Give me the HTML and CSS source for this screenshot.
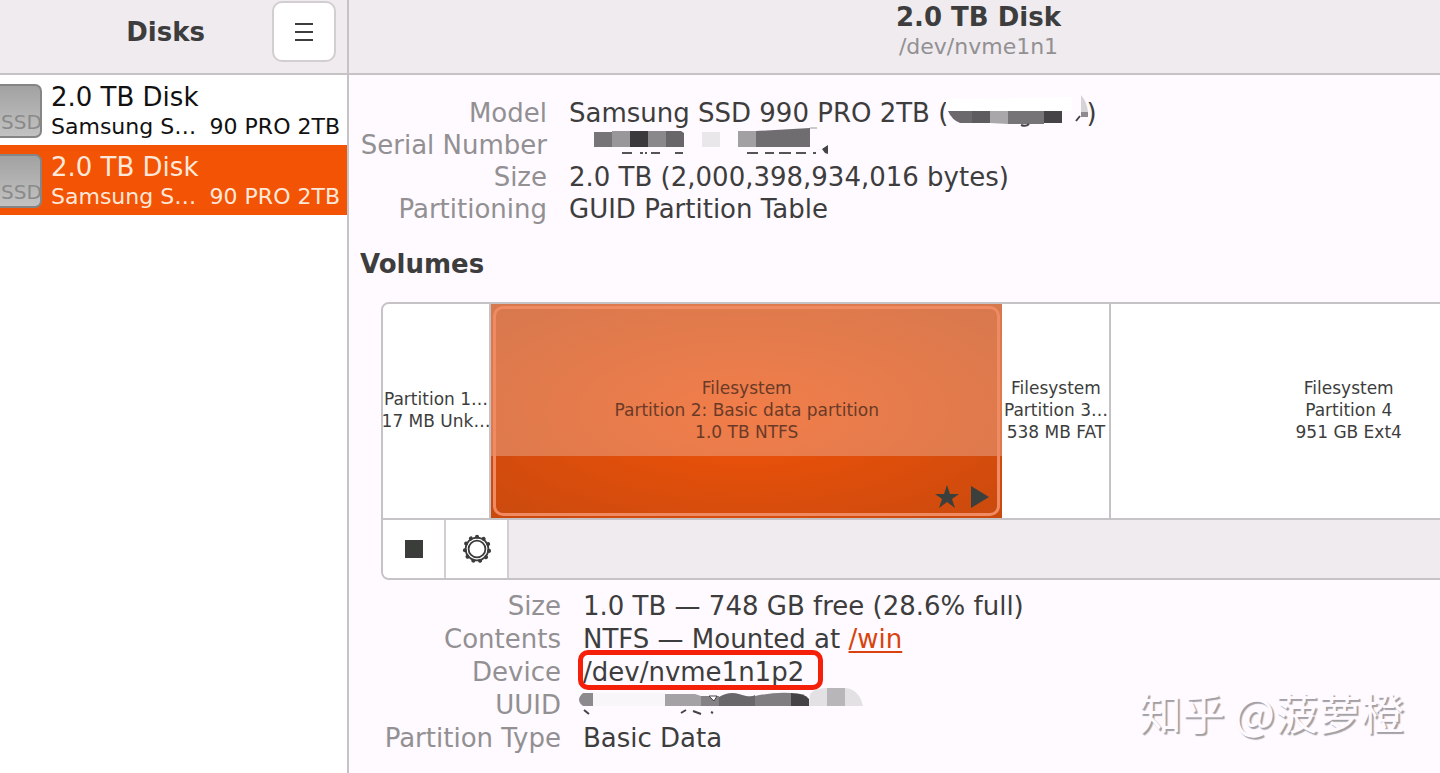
FILE: index.html
```html
<!DOCTYPE html>
<html lang="en">
<head>
<meta charset="utf-8">
<title>Disks</title>
<link rel="stylesheet" href="styles.css">
</head>
<body>
<div class="window">
  <aside class="sidebar">
    <header class="bar side-bar">
      <h1 class="title">Disks</h1>
      <button class="menu" type="button" aria-label="Menu">
        <svg width="20" height="20" viewBox="0 0 20 20"><path d="M1 2h18M1 10h18M1 18h18" stroke="#3d3d3d" stroke-width="2"/></svg>
      </button>
    </header>
    <nav class="disks">
      <a class="disk" href="#disk0">
        <span class="ssd">SSD</span>
        <span class="disk-text"><span class="disk-name">2.0 TB Disk</span><span class="disk-model"><span>Samsung S…</span><span>90 PRO 2TB</span></span></span>
      </a>
      <a class="disk selected" href="#disk1">
        <span class="ssd">SSD</span>
        <span class="disk-text"><span class="disk-name">2.0 TB Disk</span><span class="disk-model"><span>Samsung S…</span><span>90 PRO 2TB</span></span></span>
      </a>
    </nav>
  </aside>
  <main class="main">
    <div class="pane">
      <header class="bar main-bar">
        <h2 class="title">2.0 TB Disk</h2>
        <p class="subtitle">/dev/nvme1n1</p>
      </header>
      <div class="content">
        <dl class="facts drive">
          <dt>Model</dt>
          <dd>Samsung SSD 990 PRO 2TB (<svg class="mosaic" width="138" height="32" viewBox="949 96 138 32">
            <path d="M947 98h26l100-2v14H947z" fill="#fff"/>
            <path d="M949 110h24v12h-12q-8-3-12-12z" fill="#6c696d"/><path d="M973 110h18v12h-18z" fill="#5f5c60"/><path d="M991 110h18v13l-18-1z" fill="#aaa7ab"/><path d="M1009 110h36v13h-36z" fill="#777478"/><path d="M1045 110h18v12h-18z" fill="#464347"/>
            <path d="M1022 124q5 2 8-1M1077 120l4-5" stroke="#444" stroke-width="2" fill="none"/>
            <path d="M1082 94q6 7 7 17h-7z" fill="#d5d3d5"/><path d="M1082 111h7v5h-7z" fill="#8e8b8f"/>
          </svg>)</dd>
          <dt>Serial Number</dt>
          <dd><svg class="mosaic" width="262" height="32" viewBox="569 129 262 32">
            <path d="M594 132h18v15h-18z" fill="#777478"/><path d="M612 131h18v16h-18z" fill="#9a979b"/><path d="M630 131h18v16h-18z" fill="#3c393d"/><path d="M648 131h18v16h-18z" fill="#8b888c"/><path d="M666 131h15l3 2v14h-18z" fill="#69666a"/>
            <path d="M702 132h18v15h-18z" fill="#e9e7e9"/><path d="M738 131h18v16h-18z" fill="#a3a0a4"/><path d="M756 131l54-3v19h-54z" fill="#706d71"/><path d="M810 128h7" stroke="#999"/>
            <path d="M622 153h10M640 153h3M645 153h2M651 153h9M675 153h8M747 153h11M765 153h9M779 153h12M796 153h10M813 153h3" stroke="#555" stroke-width="2"/><path d="M822 149l6-4v9l-3-1z" fill="#444"/>
          </svg></dd>
          <dt>Size</dt><dd>2.0 TB (2,000,398,934,016 bytes)</dd>
          <dt>Partitioning</dt><dd>GUID Partition Table</dd>
        </dl>
        <h3 class="heading">Volumes</h3>
        <section class="volumes">
          <div class="grid">
            <div class="volume"><span>Partition 1…</span><span>17 MB Unk…</span></div>
            <div class="volume active">
              <span>Filesystem</span><span>Partition 2: Basic data partition</span><span>1.0 TB NTFS</span>
              <svg class="marks" width="58" height="26" viewBox="0 0 58 26" fill="#3b403c"><path d="M13 1l3 9h9l-7 5 3 9-8-6-8 6 3-9-7-5h9z"/><path d="M37 2l18 11-18 11z"/></svg>
            </div>
            <div class="volume"><span>Filesystem</span><span>Partition 3…</span><span>538 MB FAT</span></div>
            <div class="volume"><span>Filesystem</span><span>Partition 4</span><span>951 GB Ext4</span></div>
          </div>
          <div class="tools">
            <button class="tool" type="button" aria-label="Unmount"><svg width="18" height="18"><path d="M0 0h18v18H0z" fill="#3b3d3b"/></svg></button>
            <button class="tool" type="button" aria-label="Options"><svg width="30" height="30" viewBox="-15 -15 30 30" fill="none" stroke="#3b3d3b"><circle r="12.2" stroke-width="4" stroke-linecap="round" stroke-dasharray="0.1 6.869" transform="rotate(-90)"/><circle r="11.4" stroke-width="1.8"/><circle r="8.4" stroke-width="1.8"/></svg></button>
          </div>
        </section>
        <dl class="facts partition">
          <dt>Size</dt><dd>1.0 TB — 748 GB free (28.6% full)</dd>
          <dt>Contents</dt><dd>NTFS — Mounted at <a class="link" href="#win">/win</a></dd>
          <dt>Device</dt><dd><span class="marked">/dev/nvme1n1p2</span></dd>
          <dt>UUID</dt>
          <dd><svg class="mosaic" width="280" height="32" viewBox="584 689 280 32">
            <path d="M594 693h72v13h-72z" fill="#f8f6f8"/><path d="M584 693h10v13h-10q-8-6 0-13z" fill="#8d8a8e"/><path d="M666 694h30l6 2v10h-36z" fill="#a5a2a6"/><path d="M702 696h18v10h-18z" fill="#858286"/><path d="M720 697q10-6 20-3 12 4 16 1v11h-36z" fill="#6a676b"/><path d="M756 696q18-4 36-3v13h-36z" fill="#817e82"/><path d="M792 693q14 0 18 6v7h-18z" fill="#464347"/>
            <path d="M710 696h8l-3 5z" fill="#fff" stroke="#444"/>
            <path d="M811 694q4-6 17-6v18h-18z" fill="#e3e1e3"/><path d="M828 688h18v18h-18z" fill="#b8b6b8"/><path d="M846 688q14 1 18 18h-18z" fill="#e3e1e3"/>
            <path d="M585 710l5 4M682 713l5-3M694 711l8 3M712 712l2 1" stroke="#444" stroke-width="2"/>
          </svg></dd>
          <dt>Partition Type</dt><dd>Basic Data</dd>
        </dl>
      </div>
    </div>
  </main>
  <div class="watermark">知乎 @菠萝橙</div>
</div>
</body>
</html>
```
FILE: styles.css
```css
* { box-sizing: border-box; }
body, h1, h2, h3, p, dl, dd { margin: 0; }
body { font: 26px/32px "DejaVu Sans", sans-serif; color: #3d3d3d; background: #fefaff; }
button { font: inherit; padding: 0; background: #fff; }
svg { display: block; }

.window { position: relative; display: flex; min-height: 100vh; overflow: hidden; }
.sidebar { flex: none; width: 349px; background: #fff; border-right: 2px solid #c6c3c6; }
.main { flex: 1; min-width: 0; overflow: hidden; }
.pane { width: calc(100% + 168px); }

.bar { height: 75px; background: #efebef; border-bottom: 2px solid #c6c3c6; }
.title { font-size: 26px; line-height: 32px; font-weight: bold; }
.side-bar { display: flex; justify-content: flex-end; align-items: flex-start; gap: 67px; padding: 1px 11px 0 0; }
.side-bar .title { padding-top: 15px; }
.menu { display: grid; place-items: center; width: 64px; height: 61px; border: 2px solid #d2ced2; border-radius: 10px; }
.main-bar { padding-top: 1px; text-align: center; }
.subtitle { font-size: 22px; line-height: 28px; color: #929092; }

.disk { display: flex; align-items: center; gap: 9px; height: 70px; padding: 1px 7px 0 0; color: #111; text-decoration: none; }
.selected { background: #f25305; color: #ffe8da; }
.ssd { display: flex; align-items: flex-end; width: 42px; height: 54px; padding-left: 1px; border: 2px solid #858585; border-left: 0; border-radius: 0 7px 7px 0; background: linear-gradient(#a2a2a2, #c2c2c2); font-size: 20px; line-height: 28px; color: #8a8a8a; }
.disk-text { flex: 1; display: flex; flex-direction: column; }
.disk-name { line-height: 32px; }
.disk-model { display: flex; justify-content: space-between; font-size: 22px; line-height: 28px; white-space: nowrap; }

.content { padding: 22px 20px 0 11px; }
.facts { display: grid; column-gap: 22px; white-space: nowrap; }
.facts dt { text-align: right; color: #929092; }
.drive { grid-template-columns: 187px 1fr; grid-auto-rows: 32px; }
.partition { grid-template-columns: 201px 1fr; grid-auto-rows: 33px; padding-top: 10px; }
.mosaic { display: inline-block; vertical-align: top; overflow: visible; }
.link { color: #d8430f; text-underline-offset: 3px; }
.marked { position: relative; }
.marked::after { content: ""; position: absolute; inset: -7px -19px -3px -5px; border: 5px solid #f5200a; border-radius: 10px; }
.heading { padding-top: 23px; font-size: 26px; line-height: 32px; }

.volumes { margin: 22px 0 0 21px; border: 2px solid #c6c3c6; border-radius: 8px; background: #efebef; overflow: hidden; }
.grid { display: grid; grid-template-columns: 108px 513fr 109px 476fr; height: 216px; border-bottom: 2px solid #c6c3c6; }
.volume { position: relative; display: flex; flex-direction: column; justify-content: center; align-items: center; padding-bottom: 2px; background: #fff; border-right: 2px solid #c6c3c6; font-size: 17px; line-height: 22px; white-space: nowrap; overflow: hidden; }
.volume:last-child { border-right: 0; }
.active { border-right: 0; color: #6a3a27; background: linear-gradient(rgba(240, 210, 200, .34) 0 152px, transparent 152px), radial-gradient(ellipse at center, #f35208, #c94a0e); }
.active::before { content: ""; position: absolute; inset: 2px; border: 3px solid #f08a62; border-radius: 10px; }
.marks { position: absolute; right: 10px; bottom: 8px; }
.tools { display: flex; height: 58px; }
.tool { display: grid; place-items: center; width: 63px; border: 0; border-right: 2px solid #d2ced2; }

.watermark { position: absolute; right: 36px; bottom: 32px; font: 43px/60px "Noto Sans CJK SC", sans-serif; color: #fefaff; text-shadow: 2px 2px 1px #a3a0a3; white-space: nowrap; }
```
